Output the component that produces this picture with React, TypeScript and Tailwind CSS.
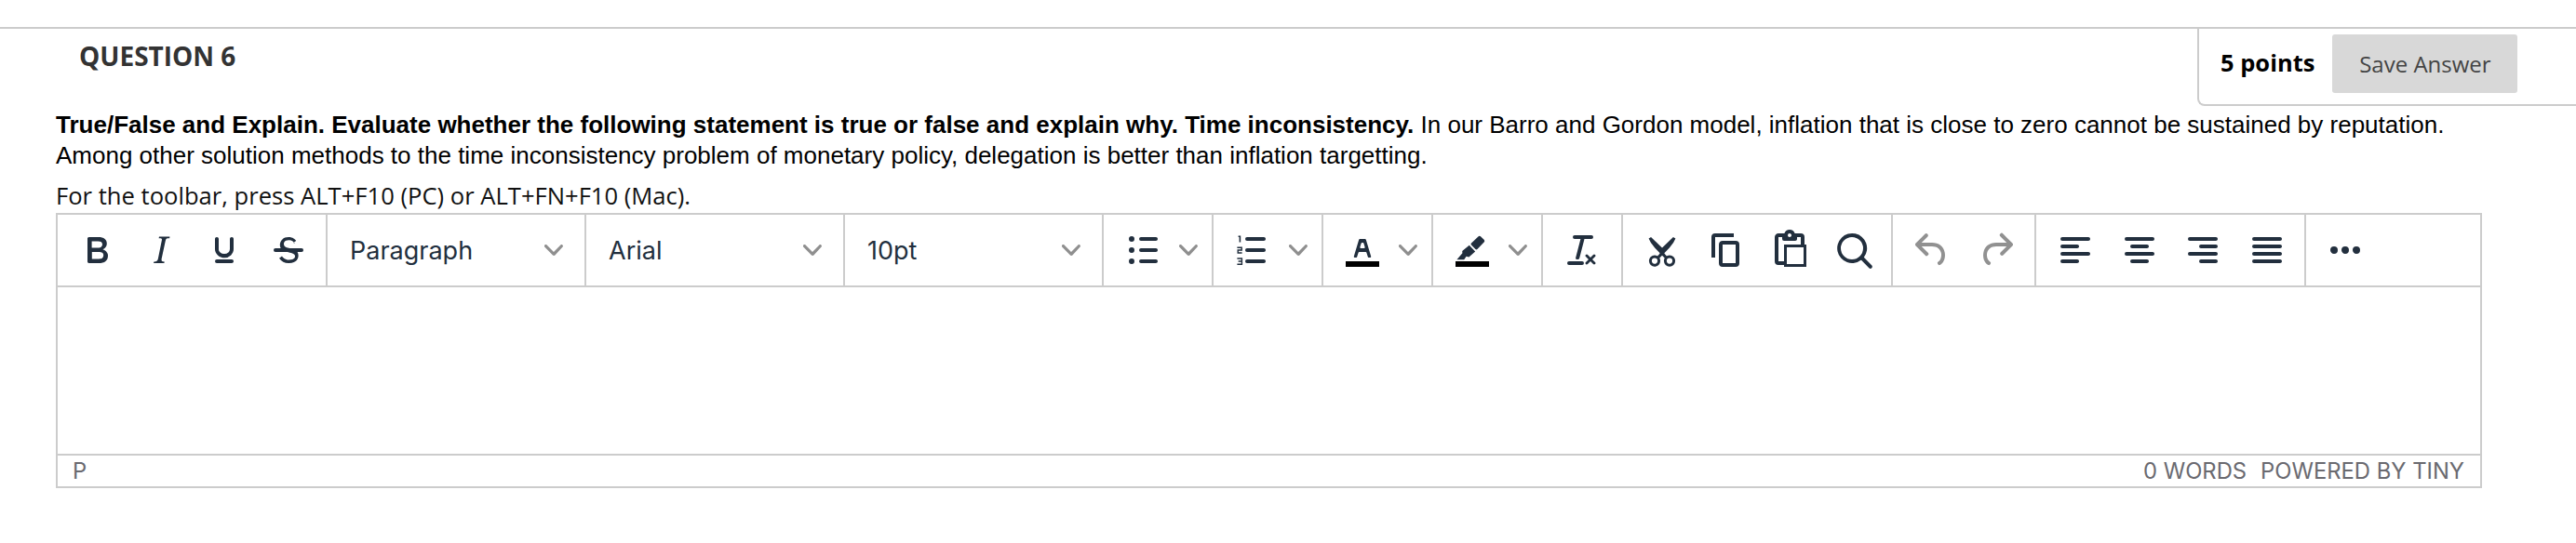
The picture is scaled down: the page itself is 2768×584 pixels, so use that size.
const dark = "#222f3e";

function Icon({ d, color = dark, size = 48 }: { d: string; color?: string; size?: number }) {
  return (
    <svg width={size} height={size} viewBox="0 0 24 24" fill={color} fillRule="evenodd">
      <path d={d} />
    </svg>
  );
}

function Chevron() {
  return (
    <svg width="20" height="20" viewBox="0 0 10 10" fill="#8f8f8f">
      <path d="M8.7 2.2c.3-.3.8-.3 1 0 .4.4.4.9 0 1.2L5.7 7.8c-.3.3-.9.3-1.2 0L.2 3.4a.8.8 0 0 1 0-1.2c.3-.3.8-.3 1.1 0L5 6l3.7-3.8z" />
    </svg>
  );
}

const paths = {
  bold: "M7.8 19c-.3 0-.5 0-.6-.2l-.2-.5V5.7c0-.2 0-.4.2-.5l.6-.2h5c1.5 0 2.7.3 3.5 1 .7.6 1.1 1.4 1.1 2.5a3 3 0 0 1-.6 1.9c-.4.6-1 1-1.6 1.2.4.1.9.3 1.3.6s.8.7 1 1.2c.4.4.5 1 .5 1.6 0 1.3-.4 2.3-1.3 3-.8.7-2.1 1-3.8 1H7.8zm5-8.3c.6 0 1.2-.1 1.6-.5.4-.3.6-.7.6-1.3 0-1.1-.8-1.7-2.3-1.7H9.3v3.5h3.4zm.5 6c.7 0 1.3-.1 1.7-.4.4-.4.6-.9.6-1.5s-.2-1-.7-1.4c-.4-.3-1-.4-2-.4H9.4v3.8h4z",
  italic: "M16.7 4.7l-.1.9h-.3c-.6 0-1 0-1.4.3-.3.3-.4.6-.5 1.1l-2.1 9.8v.6c0 .5.4.8 1.4.8h.2l-.2.8H8l.2-.8h.2c1.1 0 1.8-.5 2-1.5l2-9.8.1-.5c0-.6-.4-.8-1.4-.8h-.3l.2-.9h5.8z",
  underline: "M16 5c.6 0 1 .4 1 1v5.5a4 4 0 0 1-.4 1.8l-1 1.4a5.3 5.3 0 0 1-5.5 1 5 5 0 0 1-1.6-1c-.5-.4-.8-.9-1.1-1.4a4 4 0 0 1-.4-1.8V6c0-.6.4-1 1-1s1 .4 1 1v5.5c0 .3 0 .6.2 1l.6.7a3.3 3.3 0 0 0 2.2.8 3.4 3.4 0 0 0 2.2-.8c.3-.2.4-.5.6-.8l.2-.9V6c0-.6.4-1 1-1zM8 17h8c.6 0 1 .4 1 1s-.4 1-1 1H8a1 1 0 0 1 0-2z",
  strike: "M15.6 8.5c-.5-.7-1-1.1-1.3-1.3-.6-.4-1.3-.6-2-.6-2.7 0-2.8 1.7-2.8 2.1 0 1.6 1.8 2 3.2 2.3 4.4.9 4.6 2.8 4.6 3.9 0 1.4-.7 4.1-5 4.1A6.2 6.2 0 0 1 7 16.4l1.5-1.1c.4.6 1.6 2 3.7 2 1.6 0 2.5-.4 3-1 .3-.4.3-.8.3-1.1 0-1.1-1.2-1.6-3.6-2.1-1-.2-2.1-.5-3-1.1-1-.7-1.5-1.6-1.5-2.8 0-.7.2-2 1.3-3 .8-.8 1.9-1.2 3.3-1.2 2.4 0 3.5 1.2 4.1 2l-1.5 1z",
  removeFormat: "M13.2 6a1 1 0 0 1 0 .2l-2.6 10a1 1 0 0 1-1 .8h-.2a.8.8 0 0 1-.8-1l2.6-10H8a1 1 0 1 1 0-2h9a1 1 0 0 1 0 2h-3.8zM5 18h7a1 1 0 0 1 0 2H5a1 1 0 0 1 0-2zm13 1.5L16.5 18 15 19.5a.7.7 0 0 1-1-1l1.5-1.5-1.5-1.5a.7.7 0 0 1 1-1l1.5 1.5 1.5-1.5a.7.7 0 0 1 1 1L17.5 17l1.5 1.5a.7.7 0 0 1-1 1z",
  copy: "M16 3H6a2 2 0 0 0-2 2v11h2V5h10V3zm1 4a2 2 0 0 1 2 2v10a2 2 0 0 1-2 2h-7a2 2 0 0 1-2-2V9c0-1.2.9-2 2-2h7zm0 12V9h-7v10h7z",
  paste: "M18 9V5h-2v1c0 .6-.4 1-1 1H9a1 1 0 0 1-1-1V5H6v13h3V9h9zM9 20H6a2 2 0 0 1-2-2V5c0-1.1.9-2 2-2h3.2A3 3 0 0 1 12 1a3 3 0 0 1 2.8 2H18a2 2 0 0 1 2 2v4h1v12H9v-1zm1.5-9.5v9h9v-9h-9zM12 3a1 1 0 0 0-1 1c0 .5.4 1 1 1s1-.5 1-1-.4-1-1-1z",
  search: "M16 17.3a8 8 0 1 1 1.4-1.4l4.3 4.4a1 1 0 0 1-1.4 1.4l-4.4-4.4zm-5-.3a6 6 0 1 0 0-12 6 6 0 0 0 0 12z",
  undo: "M6.4 8H12c3.7 0 6.2 2 6.8 5.1.6 2.7-.4 5.6-2.3 6.8a1 1 0 0 1-1-1.8c1.1-.6 1.8-2.7 1.4-4.6-.5-2.1-2.1-3.5-4.9-3.5H6.4l3.3 3.3a1 1 0 1 1-1.4 1.4l-5-5a1 1 0 0 1 0-1.4l5-5a1 1 0 0 1 1.4 1.4L6.4 8z",
  redo: "M17.6 10H12c-2.8 0-4.4 1.4-4.9 3.5-.4 2 .3 4 1.4 4.6a1 1 0 1 1-1 1.8c-2-1.2-2.9-4.1-2.3-6.8.6-3 3-5.1 6.8-5.1h5.6l-3.3-3.3a1 1 0 1 1 1.4-1.4l5 5a1 1 0 0 1 0 1.4l-5 5a1 1 0 0 1-1.4-1.4l3.3-3.3z",
  alignLeft: "M5 5h14c.6 0 1 .4 1 1s-.4 1-1 1H5a1 1 0 1 1 0-2zm0 4h8c.6 0 1 .4 1 1s-.4 1-1 1H5a1 1 0 1 1 0-2zm0 8h8c.6 0 1 .4 1 1s-.4 1-1 1H5a1 1 0 0 1 0-2zm0-4h14c.6 0 1 .4 1 1s-.4 1-1 1H5a1 1 0 0 1 0-2z",
  alignCenter: "M5 5h14c.6 0 1 .4 1 1s-.4 1-1 1H5a1 1 0 1 1 0-2zm3 4h8c.6 0 1 .4 1 1s-.4 1-1 1H8a1 1 0 1 1 0-2zm0 8h8c.6 0 1 .4 1 1s-.4 1-1 1H8a1 1 0 0 1 0-2zm-3-4h14c.6 0 1 .4 1 1s-.4 1-1 1H5a1 1 0 0 1 0-2z",
  alignRight: "M5 5h14c.6 0 1 .4 1 1s-.4 1-1 1H5a1 1 0 1 1 0-2zm6 4h8c.6 0 1 .4 1 1s-.4 1-1 1h-8a1 1 0 0 1 0-2zm0 8h8c.6 0 1 .4 1 1s-.4 1-1 1h-8a1 1 0 0 1 0-2zm-6-4h14c.6 0 1 .4 1 1s-.4 1-1 1H5a1 1 0 0 1 0-2z",
  alignJustify: "M5 5h14c.6 0 1 .4 1 1s-.4 1-1 1H5a1 1 0 1 1 0-2zm0 4h14c.6 0 1 .4 1 1s-.4 1-1 1H5a1 1 0 1 1 0-2zm0 4h14c.6 0 1 .4 1 1s-.4 1-1 1H5a1 1 0 0 1 0-2zm0 4h14c.6 0 1 .4 1 1s-.4 1-1 1H5a1 1 0 0 1 0-2z",
  more: "M6 10a2 2 0 0 0-2 2c0 1.1.9 2 2 2a2 2 0 0 0 2-2 2 2 0 0 0-2-2zm12 0a2 2 0 0 0-2 2c0 1.1.9 2 2 2a2 2 0 0 0 2-2 2 2 0 0 0-2-2zm-6 0a2 2 0 0 0-2 2c0 1.1.9 2 2 2a2 2 0 0 0 2-2 2 2 0 0 0-2-2z",
  bullets: "M11 5h8c.6 0 1 .4 1 1s-.4 1-1 1h-8a1 1 0 0 1 0-2zm0 6h8c.6 0 1 .4 1 1s-.4 1-1 1h-8a1 1 0 0 1 0-2zm0 6h8c.6 0 1 .4 1 1s-.4 1-1 1h-8a1 1 0 0 1 0-2zM4.500 6a1.500 1.500 0 1 0 3 0 1.500 1.500 0 1 0-3 0zm0 6a1.500 1.500 0 1 0 3 0 1.500 1.500 0 1 0-3 0zm0 6a1.500 1.500 0 1 0 3 0 1.500 1.500 0 1 0-3 0z",
  textA: "M8.7 16h-.8a.5.5 0 0 1-.5-.6l2.7-9c.1-.3.3-.4.5-.4h2.8c.2 0 .4.1.5.4l2.7 9a.5.5 0 0 1-.5.6h-.8a.5.5 0 0 1-.4-.4l-.7-2.2c0-.3-.3-.4-.5-.4h-3.4c-.2 0-.4.1-.5.4l-.7 2.2c0 .3-.2.4-.4.4zm2.6-7.6l-.6 2a.5.5 0 0 0 .5.6h1.6a.5.5 0 0 0 .5-.6l-.6-2c0-.3-.3-.4-.5-.4h-.4c-.2 0-.4.1-.5.4z",
};

function Strike() {
  return (
    <svg width="48" height="48" viewBox="0 0 24 24" fill={dark}>
      <path d={paths.strike} />
      <path d="M5 11h14a1 1 0 0 1 0 2H5a1 1 0 0 1 0-2z" />
    </svg>
  );
}

function NumList() {
  return (
    <svg width="48" height="48" viewBox="0 0 24 24" fill={dark}>
      <path d="M9 5h9c.6 0 1 .4 1 1s-.4 1-1 1H9a1 1 0 0 1 0-2zm0 6h9c.6 0 1 .4 1 1s-.4 1-1 1H9a1 1 0 0 1 0-2zm0 6h9c.6 0 1 .4 1 1s-.4 1-1 1H9a1 1 0 0 1 0-2z" />
      <path d="M4.300 4.300h1.300v3.500h-.8V5h-.5z" />
      <g fill="none" stroke={dark} strokeWidth="0.7">
        <path d="M3.700 10.600h2.400v1.400H4.100v1.500h2.200" />
        <path d="M3.700 16.500h2.500v3.100H3.700M4.300 18h1.900" />
      </g>
    </svg>
  );
}

function Highlight() {
  return (
    <svg width="48" height="48" viewBox="0 0 24 24" fill={dark}>
      <path d="M11.500 8.200l3.700-3.500c.4-.4 1-.4 1.400 0l1.700 1.700c.4.400.4 1 0 1.400l-3.600 3.700c-.3.3-.7.3-1 0l-2.200-2.300c-.3-.3-.3-.7 0-1z" />
      <path d="M10.400 9.400l3.200 3.300-3.400 3-1.400-.3-1.200 1.700H3.700l3-3.500-.1-1.100z" />
      <path d="M3 18h18v3H3z" fill="#000" />
    </svg>
  );
}

function TextColor() {
  return (
    <svg width="48" height="48" viewBox="0 0 24 24" fill={dark}>
      <path d={paths.textA} fillRule="evenodd" />
      <path d="M3 18h18v3H3z" fill="#000" />
    </svg>
  );
}

function Cut() {
  return (
    <svg width="48" height="48" viewBox="0 0 24 24" fill="none" stroke={dark} strokeWidth="1.500">
      <circle cx="8" cy="17.800" r="2.300" />
      <circle cx="16" cy="17.800" r="2.300" />
      <path d="M10 15.800l5.400-5.600c1.300-1.400 2.400-2.800 3.100-4.700l-7 6.800" fill={dark} />
      <path d="M14 15.800L8.600 10.200C7.300 8.800 6.200 7.400 5.500 5.500l7 6.800" fill={dark} />
    </svg>
  );
}

function Btn({ children }: { children: React.ReactNode }) {
  return <div className="flex w-[68.5px] shrink-0 items-center justify-center">{children}</div>;
}

function IconGroup({ width, children }: { width: string; children: React.ReactNode }) {
  return <div className={`flex items-center border-r-2 border-[#cccccc] pl-2 ${width}`}>{children}</div>;
}

function SelectBox({ label }: { label: string }) {
  return (
    <div className="flex w-[278px] items-center justify-between border-r-2 border-[#cccccc] pr-[23px] pl-6">
      <span className="pt-[2px] text-[27px] text-[#222f3e]">{label}</span>
      <Chevron />
    </div>
  );
}

function SplitBtn({ children }: { children: React.ReactNode }) {
  return (
    <div className="flex w-[118px] items-center justify-between border-r-2 border-[#cccccc] pr-[15px] pl-[18px]">
      {children}
      <Chevron />
    </div>
  );
}

export default function App() {
  return (
    <div className="min-h-[584px] bg-white pt-[29px] font-['Open_Sans',sans-serif]">
      <div className="flex h-[85px] justify-between border-t-2 border-[#cccccc]">
        <h2 className="pt-[9px] pl-[85px] text-[28px] leading-[40px] font-bold text-[#333333]">QUESTION 6</h2>
        <div className="flex w-[407px] items-start rounded-bl-lg border-b-2 border-l-2 border-[#cccccc] pt-[6px] pl-[23px]">
          <span className="pt-[12px] text-[25.5px] leading-[36px] font-bold text-black">5 points</span>
          <button className="ml-[19px] h-[63px] w-[199px] rounded-[3px] bg-[#d8d8d8] text-[24px] text-[#444444]">Save Answer</button>
        </div>
      </div>

      <div className="px-[60px]">
        <p className="pt-[4px] font-['Liberation_Sans',sans-serif] text-[26px] leading-[32.5px] whitespace-nowrap text-black">
          <strong>True/False and Explain. Evaluate whether the following statement is true or false and explain why. Time inconsistency.</strong>{" "}
          In our Barro and Gordon model, inflation that is close to zero cannot be sustained by reputation.
          <br />
          Among other solution methods to the time inconsistency problem of monetary policy, delegation is better than inflation targetting.
        </p>
        <p className="pt-[10px] text-[25.6px] leading-[36px] text-[#111111]">For the toolbar, press ALT+F10 (PC) or ALT+FN+F10 (Mac).</p>

        <div className="flex h-[296px] w-[2607px] flex-col border-2 border-[#cccccc] font-['Inter',sans-serif]">
          <div className="flex h-[78px] border-b-2 border-[#cccccc]">
            <IconGroup width="w-[290px]">
              <Btn><Icon d={paths.bold} /></Btn>
              <Btn><Icon d={paths.italic} /></Btn>
              <Btn><Icon d={paths.underline} /></Btn>
              <Btn><Strike /></Btn>
            </IconGroup>
            <SelectBox label="Paragraph" />
            <SelectBox label="Arial" />
            <SelectBox label="10pt" />
            <SplitBtn><Icon d={paths.bullets} /></SplitBtn>
            <SplitBtn><NumList /></SplitBtn>
            <SplitBtn><TextColor /></SplitBtn>
            <SplitBtn><Highlight /></SplitBtn>
            <IconGroup width="w-[86px]">
              <Btn><Icon d={paths.removeFormat} /></Btn>
            </IconGroup>
            <IconGroup width="w-[290px]">
              <Btn><Cut /></Btn>
              <Btn><Icon d={paths.copy} /></Btn>
              <Btn><Icon d={paths.paste} /></Btn>
              <Btn><Icon d={paths.search} /></Btn>
            </IconGroup>
            <IconGroup width="w-[154px]">
              <Btn><Icon d={paths.undo} color="#919191" /></Btn>
              <Btn><Icon d={paths.redo} color="#919191" /></Btn>
            </IconGroup>
            <IconGroup width="w-[290px]">
              <Btn><Icon d={paths.alignLeft} /></Btn>
              <Btn><Icon d={paths.alignCenter} /></Btn>
              <Btn><Icon d={paths.alignRight} /></Btn>
              <Btn><Icon d={paths.alignJustify} /></Btn>
            </IconGroup>
            <div className="flex flex-1 items-center pl-2">
              <Btn><Icon d={paths.more} /></Btn>
            </div>
          </div>

          <div className="flex-1" />

          <div className="flex h-[35px] items-center justify-between border-t-2 border-[#cccccc] pr-[17px] pl-4 text-[23.8px] text-[#6a6a70]">
            <span>P</span>
            <div className="flex gap-[15px]">
              <span>0 WORDS</span>
              <span>POWERED BY TINY</span>
            </div>
          </div>
        </div>
      </div>
    </div>
  );
}
